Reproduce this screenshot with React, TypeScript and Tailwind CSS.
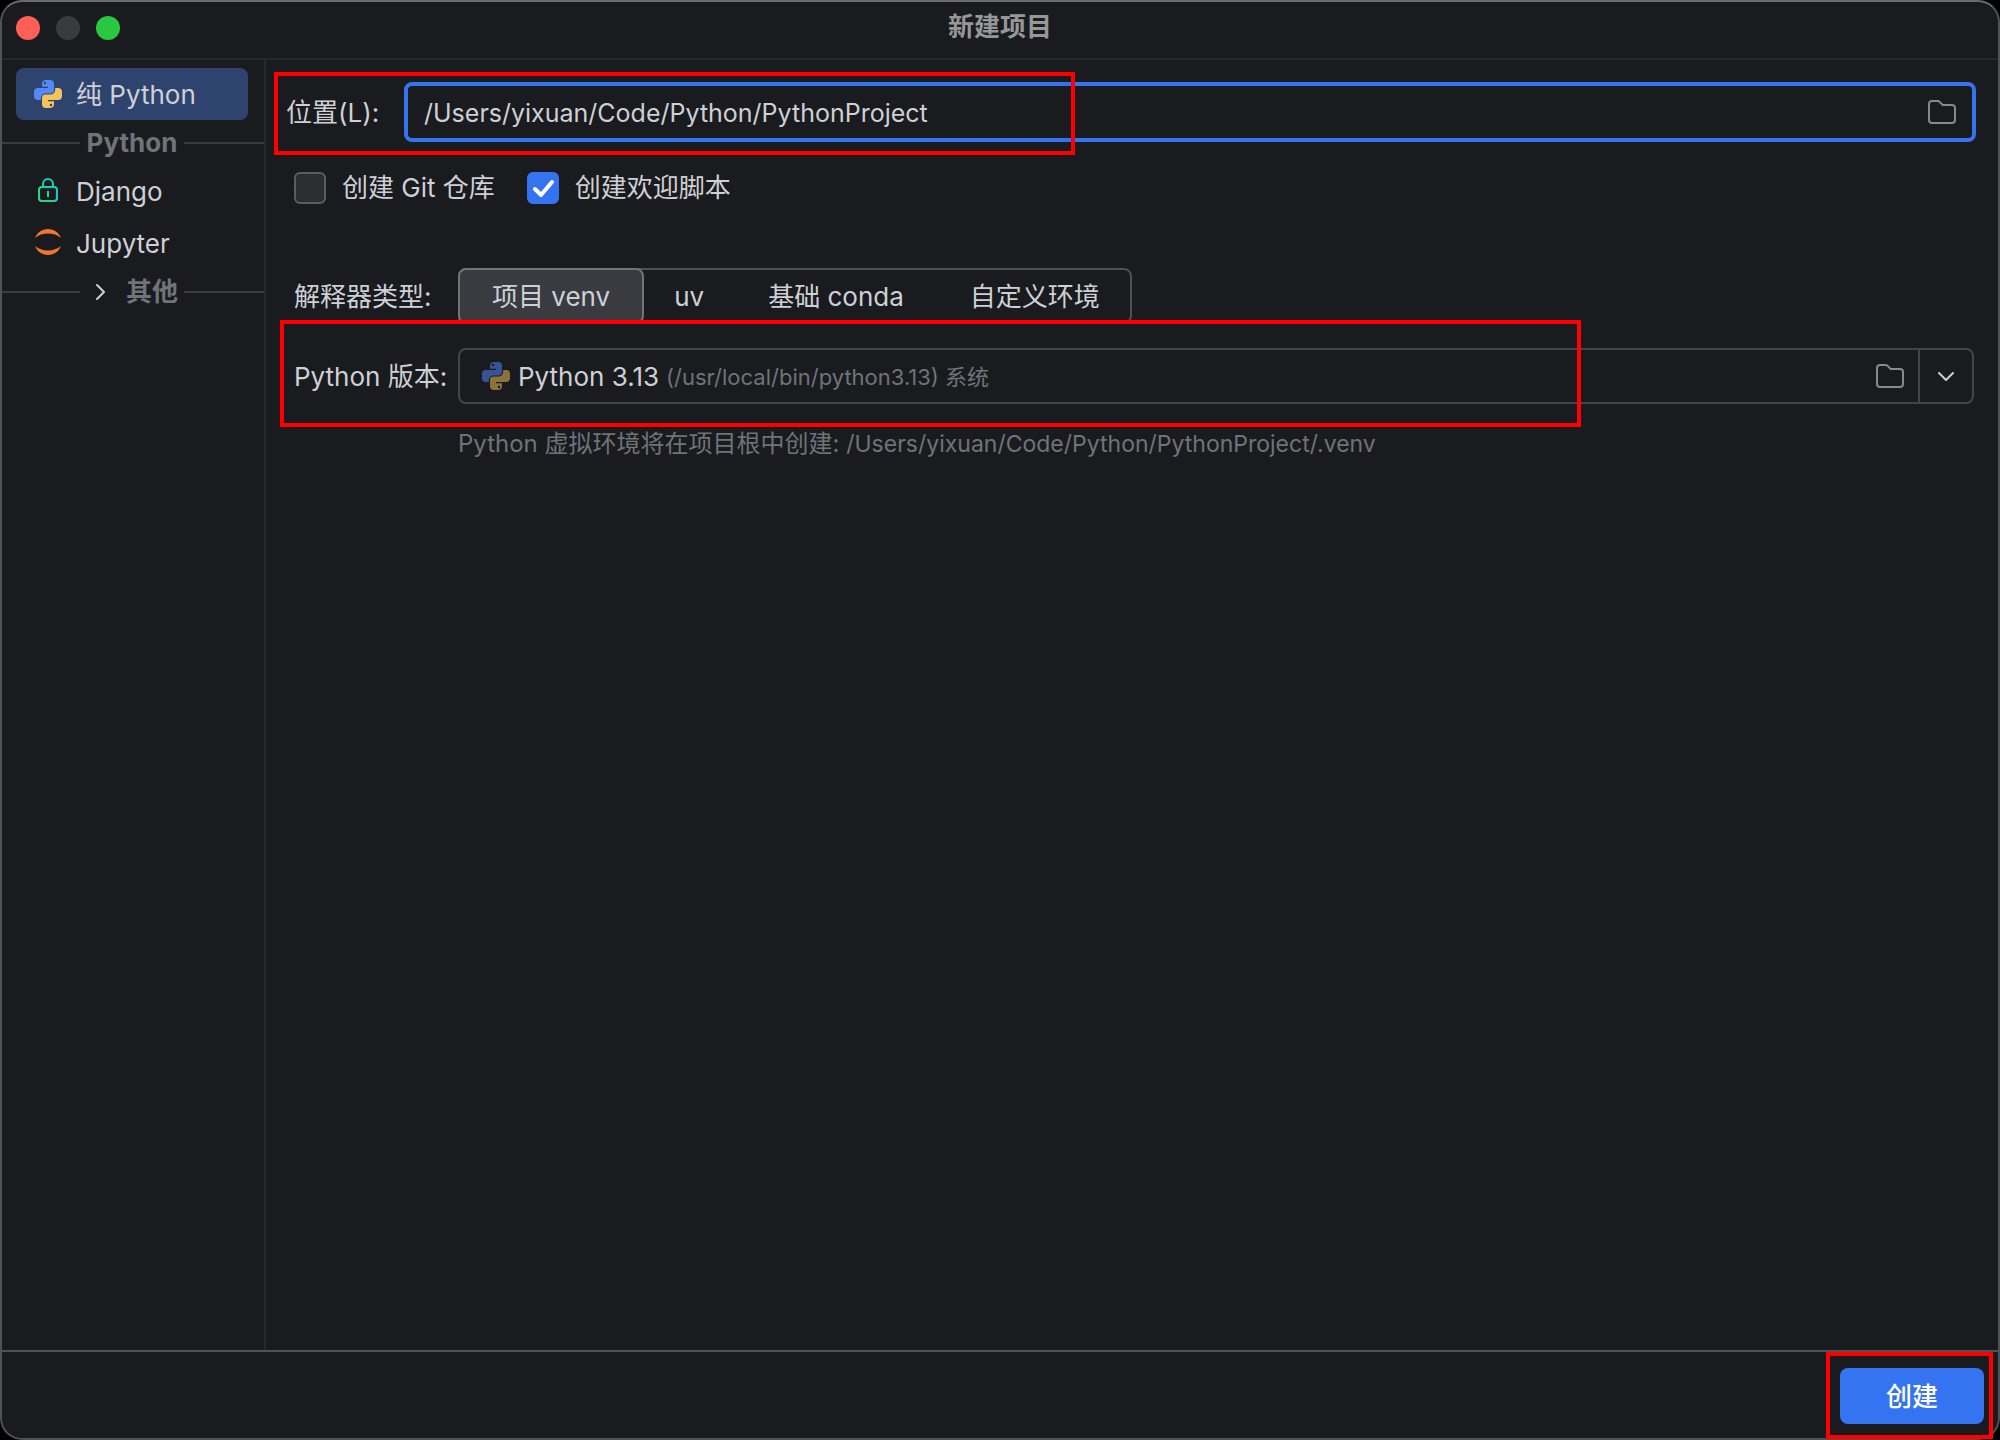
import { useState, type ReactNode } from "react";

function PythonIcon({ dim = false }: { dim?: boolean }) {
  const half =
    "M14 0H16A4 4 0 0 1 20 4V10A3.4 3.4 0 0 1 16.6 13.4H11.6A4.8 4.8 0 0 0 6.8 18.2V20H4A4 4 0 0 1 0 16V12A4 4 0 0 1 4 8H14V6.8H8V4A4 4 0 0 1 12 0ZM11 1.8A1.2 1.2 0 1 0 11 4.2A1.2 1.2 0 1 0 11 1.8Z";
  return (
    <svg viewBox="0 0 28 28" className="size-7 shrink-0" fillRule="evenodd" aria-hidden="true">
      <path d={half} fill={dim ? "#375596" : "#548af7"} />
      <path d={half} fill={dim ? "#8c733a" : "#f2c55c"} transform="rotate(180 14 14)" />
    </svg>
  );
}

function DjangoIcon() {
  return (
    <svg viewBox="0 0 28 28" className="size-7 shrink-0" fill="none" aria-hidden="true">
      <defs>
        <linearGradient id="lock" x1="4" y1="26" x2="24" y2="8" gradientUnits="userSpaceOnUse">
          <stop offset="0" stopColor="#e8e337" />
          <stop offset="0.14" stopColor="#21d789" />
          <stop offset="0.5" stopColor="#21d789" />
          <stop offset="0.75" stopColor="#10c8e0" />
          <stop offset="1" stopColor="#21d789" />
        </linearGradient>
      </defs>
      <g stroke="url(#lock)" strokeWidth="2">
        <rect x="5" y="10" width="18" height="14" rx="3" />
        <path d="M9 10V7A5 5 0 0 1 19 7V10" />
        <path d="M14 14V20" stroke="#21d789" />
      </g>
    </svg>
  );
}

function JupyterIcon() {
  return (
    <svg viewBox="0 1 28 28" className="size-7 shrink-0" fill="#f37726" aria-hidden="true">
      <path d="M1.2 10C3 4.6 8 1 14 1S25 4.6 26.8 10C23.5 7 19 5.6 14 5.6S4.5 7 1.2 10Z" />
      <path d="M1.2 18C3 23.4 8 27 14 27S25 23.4 26.8 18C23.5 21 19 22.4 14 22.4S4.5 21 1.2 18Z" />
    </svg>
  );
}

function FolderIcon() {
  return (
    <svg viewBox="0 0 28 24" className="h-6 w-7" fill="none" stroke="#868a91" strokeWidth="2" aria-hidden="true">
      <path d="M1 4A3 3 0 0 1 4 1H9.8A2 2 0 0 1 11.3 1.6L14.7 5H24A3 3 0 0 1 27 8V20A3 3 0 0 1 24 23H4A3 3 0 0 1 1 20Z" />
    </svg>
  );
}

function Chevron({ className }: { className: string }) {
  return (
    <svg
      viewBox="0 0 18 10"
      className={className}
      fill="none"
      stroke="#ced0d6"
      strokeWidth="2"
      strokeLinecap="round"
      strokeLinejoin="round"
      aria-hidden="true"
    >
      <path d="M2 1L9 8L16 1" />
    </svg>
  );
}

function Highlight({ className }: { className: string }) {
  return <div aria-hidden="true" className={`pointer-events-none absolute z-10 border-4 border-[#ff0000] ${className}`} />;
}

function Separator({ children }: { children: ReactNode }) {
  return (
    <div className="flex h-[45px] items-center font-bold text-[#6f737a]">
      <span className="h-0.5 w-19.5 bg-[#393b40]" />
      <span className="flex flex-1 items-center justify-center">{children}</span>
      <span className="h-0.5 w-20 bg-[#393b40]" />
    </div>
  );
}

function SideItem({ icon, label, active, onClick }: { icon: ReactNode; label: string; active: boolean; onClick: () => void }) {
  return (
    <button
      type="button"
      onClick={onClick}
      className={`ml-3.5 mr-4 flex h-13 items-center gap-3.5 rounded-lg px-4.5 text-left ${active ? "bg-[#2e436e]" : ""}`}
    >
      {icon}
      <span className="pt-0.5">{label}</span>
    </button>
  );
}

function Check({ label, checked, onChange }: { label: string; checked: boolean; onChange: (v: boolean) => void }) {
  return (
    <label className="flex items-center gap-4">
      <span className="relative size-8">
        <input
          type="checkbox"
          checked={checked}
          onChange={(e) => onChange(e.target.checked)}
          className="block size-8 appearance-none rounded-md border-2 border-[#5a5d63] bg-[#2b2d30] checked:border-[#3574f0] checked:bg-[#3574f0]"
        />
        {checked && (
          <svg viewBox="0 0 32 32" className="pointer-events-none absolute inset-0 size-8" fill="none" stroke="#fff" strokeWidth="4" strokeLinecap="round" strokeLinejoin="round" aria-hidden="true">
            <path d="M8 17L14 23L25 10" />
          </svg>
        )}
      </span>
      {label}
    </label>
  );
}

const tabs = [
  { name: "项目 venv", pad: "px-8" },
  { name: "uv", pad: "px-7" },
  { name: "基础 conda", pad: "px-8" },
  { name: "自定义环境", pad: "px-7.5" },
];

export default function App() {
  const [item, setItem] = useState("纯 Python");
  const [path, setPath] = useState("/Users/yixuan/Code/Python/PythonProject");
  const [git, setGit] = useState(false);
  const [welcome, setWelcome] = useState(true);
  const [tab, setTab] = useState("项目 venv");

  return (
    <div className="min-h-screen bg-black font-['Inter','Noto_Sans_CJK_SC',sans-serif] text-[26px] leading-8 text-[#ced0d6]">
      <div className="flex min-h-screen flex-col rounded-[22px] border-2 border-[#505153] border-t-[#6a6b6c] bg-[#1a1b1e]">
        <header className="flex h-14.5 items-center border-b-2 border-[#27282b] px-3.5">
          <div className="flex flex-1 gap-4 pb-1">
            <button type="button" aria-label="关闭" className="size-6 rounded-full bg-[#ff5f57]" />
            <button type="button" aria-label="最小化" className="size-6 rounded-full bg-[#3a3b3d]" />
            <button type="button" aria-label="缩放" className="size-6 rounded-full bg-[#28c840]" />
          </div>
          <h1 className="pb-1.5 font-bold text-[#969799]">新建项目</h1>
          <div className="flex-1" />
        </header>

        <div className="flex flex-1">
          <nav className="flex w-66 flex-col border-r-2 border-[#27282b] pt-2">
            <SideItem icon={<PythonIcon />} label="纯 Python" active={item === "纯 Python"} onClick={() => setItem("纯 Python")} />
            <Separator>Python</Separator>
            <SideItem icon={<DjangoIcon />} label="Django" active={item === "Django"} onClick={() => setItem("Django")} />
            <SideItem icon={<JupyterIcon />} label="Jupyter" active={item === "Jupyter"} onClick={() => setItem("Jupyter")} />
            <Separator>
              <button type="button" className="flex items-center gap-4 pl-1.5">
                <Chevron className="h-2.5 w-4.5 -rotate-90" />
                其他
              </button>
            </Separator>
          </nav>

          <main className="min-w-0 flex-1 pt-5.5 pr-5.5">
            <div className="relative flex items-center pl-5">
              <label htmlFor="location" className="w-[118px] shrink-0 pt-0.5">
                位置(L):
              </label>
              <div className="flex h-15 flex-1 items-center rounded-lg border-4 border-[#3574f0] pr-4 pl-4">
                <input
                  id="location"
                  value={path}
                  onChange={(e) => setPath(e.target.value)}
                  className="min-w-0 flex-1 bg-transparent pt-0.5 text-[25px] outline-none"
                />
                <button type="button" aria-label="浏览">
                  <FolderIcon />
                </button>
              </div>
              <Highlight className="-top-2.5 left-2 h-[83px] w-[801px]" />
            </div>

            <div className="mt-7.5 flex gap-8 pl-7">
              <Check label="创建 Git 仓库" checked={git} onChange={setGit} />
              <Check label="创建欢迎脚本" checked={welcome} onChange={setWelcome} />
            </div>

            <div className="mt-16 flex items-center pl-7">
              <span id="kind" className="w-41 shrink-0 pt-0.5">
                解释器类型:
              </span>
              <div role="radiogroup" aria-labelledby="kind" className="flex h-14 rounded-lg border-2 border-[#4e5157]">
                {tabs.map((t) => (
                  <button
                    key={t.name}
                    type="button"
                    role="radio"
                    aria-checked={tab === t.name}
                    onClick={() => setTab(t.name)}
                    className={`-my-0.5 rounded-lg border-2 pt-0.5 first:-ml-0.5 last:-mr-0.5 ${t.pad} ${tab === t.name ? "border-[#6f737a] bg-[#393b40]" : "border-transparent"}`}
                  >
                    {t.name}
                  </button>
                ))}
              </div>
            </div>

            <div className="relative mt-6 flex items-center pr-0.5 pl-7">
              <label htmlFor="version" className="w-41 shrink-0 pt-0.5">
                Python 版本:
              </label>
              <div className="flex h-14 flex-1 items-center rounded-lg border-2 border-[#43454a] pl-5.5">
                <PythonIcon dim />
                <select id="version" className="ml-2 appearance-none bg-transparent pt-0.5 outline-none">
                  <option>Python 3.13</option>
                </select>
                <span className="ml-1.5 flex-1 pt-0.5 text-[22px] text-[#6f737a]">(/usr/local/bin/python3.13) 系统</span>
                <button type="button" aria-label="浏览解释器" className="mr-3.5">
                  <FolderIcon />
                </button>
                <button type="button" aria-label="展开列表" className="flex h-full w-13.5 items-center justify-center border-l-2 border-[#43454a] pt-0.5">
                  <Chevron className="h-2.5 w-4.5" />
                </button>
              </div>
              <Highlight className="-top-7 left-3.5 h-[107px] w-[1301px]" />
            </div>

            <p className="mt-6 pl-48 text-[24px] text-[#6f737a]">
              Python 虚拟环境将在项目根中创建: <span className="text-[23px]">/Users/yixuan/Code/Python/PythonProject/.venv</span>
            </p>
          </main>
        </div>

        <footer className="flex h-22 justify-end border-t-2 border-[#505153] pt-4 pr-3.5">
          <div className="relative h-14">
            <button type="button" className="h-14 w-36 rounded-lg bg-[#3574f0] pt-0.5 font-medium text-white">
              创建
            </button>
            <Highlight className="-top-4 -left-3.5 h-[87px] w-[167px]" />
          </div>
        </footer>
      </div>
    </div>
  );
}
